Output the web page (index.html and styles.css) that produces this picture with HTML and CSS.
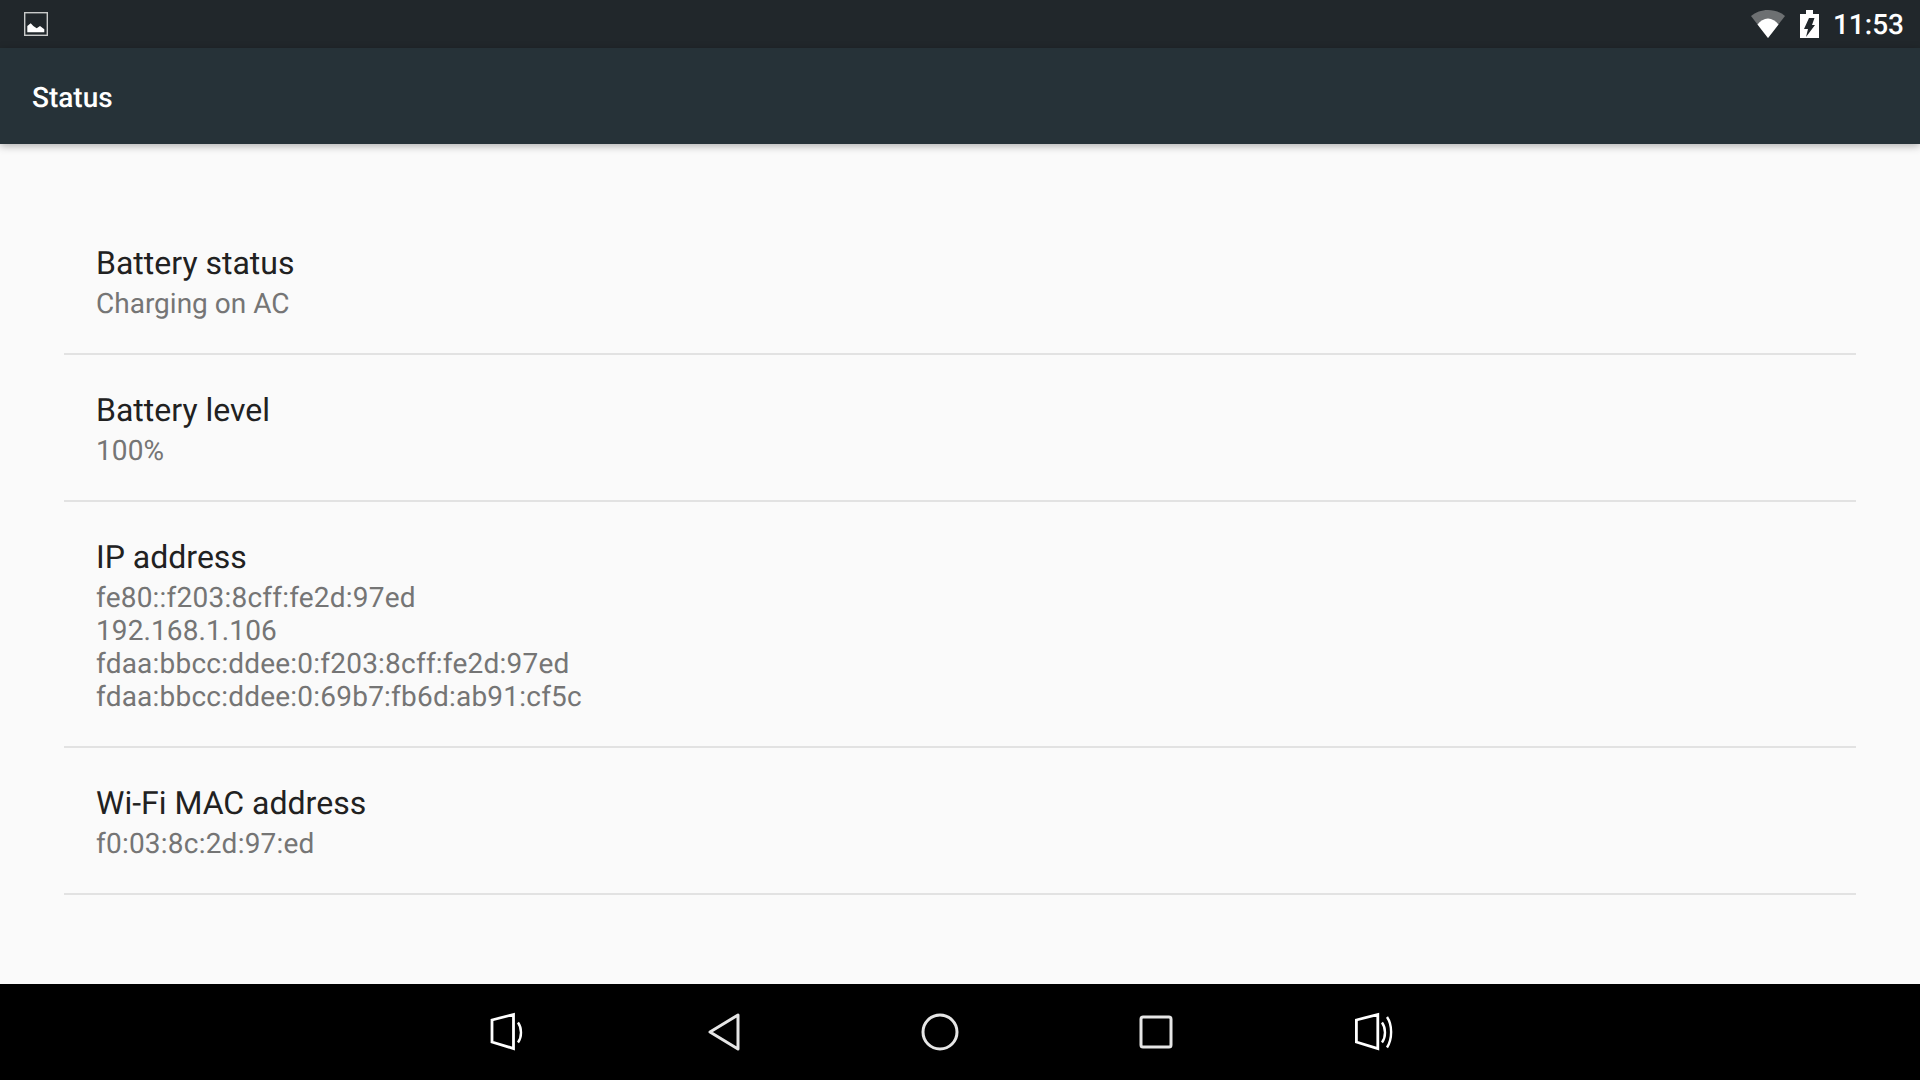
FILE: index.html
```html
<!DOCTYPE html>
<html lang="en">
<head>
<meta charset="utf-8">
<title>Status</title>
<link rel="stylesheet" href="styles.css">
</head>
<body>
<div class="screen">
  <header class="statusbar">
    <svg class="notif-icon" viewBox="0 0 24 24" width="24" height="24"><rect x="0.7" y="0.700" width="22.600" height="22.600" fill="none" stroke="#c9caca" stroke-width="1.400"/><path d="M3.300 20.300V14L6.700 11.300 9.300 14 12.700 16.300 16 14 20.300 17.300V20.300Z" fill="#fff"/></svg>
    <div class="status-right">
      <svg class="wifi" viewBox="0 0 34 28" width="34" height="28"><path d="M0 6C4.500 2.200 10.500 0 17 0S29.500 2.200 34 6L17 28Z" fill="#6d7072"/><path d="M6.500 14.500C9.300 11 13 8.500 17 8.500S24.700 11 27.500 14.500L17 28Z" fill="#fff"/></svg>
      <svg class="battery" viewBox="0 0 19 28" width="19" height="28"><path d="M6 0H13V4H19V28H0V4H6Z" fill="#fff"/><path d="M9 8H14.500L12 15H15L6 27 8 19H4Z" fill="#21272b"/></svg>
      <span class="clock">11:53</span>
    </div>
  </header>
  <div class="appbar"><h1 class="appbar-title">Status</h1></div>
  <main class="content">
    <section class="item">
      <div class="item-title">Battery status</div>
      <div class="item-sub">Charging on AC</div>
    </section>
    <section class="item">
      <div class="item-title">Battery level</div>
      <div class="item-sub num">100%</div>
    </section>
    <section class="item">
      <div class="item-title">IP address</div>
      <div class="item-sub addr">fe80::f203:8cff:fe2d:97ed</div>
      <div class="item-sub num">192.168.1.106</div>
      <div class="item-sub addr">fdaa:bbcc:ddee:0:f203:8cff:fe2d:97ed</div>
      <div class="item-sub addr">fdaa:bbcc:ddee:0:69b7:fb6d:ab91:cf5c</div>
    </section>
    <section class="item">
      <div class="item-title">Wi-Fi MAC address</div>
      <div class="item-sub addr">f0:03:8c:2d:97:ed</div>
    </section>
  </main>
  <nav class="navbar">
    <div class="nav-btn"><svg viewBox="0 0 36 40" width="36" height="40"><path d="M2 8 23.500 2.500V36.500L2 30Z" fill="none" stroke="#fff" stroke-width="2.800"/><path d="M28 10.500C32 16 32 25 28 30.500" fill="none" stroke="#fff" stroke-width="2.400"/></svg></div>
    <div class="nav-btn"><svg viewBox="0 0 36 40" width="36" height="40"><path d="M4 20 32 3V37Z" fill="none" stroke="#e6e6e6" stroke-width="3" stroke-linejoin="round"/></svg></div>
    <div class="nav-btn"><svg viewBox="0 0 38 38" width="38" height="38"><circle cx="19" cy="19" r="17" fill="none" stroke="#e6e6e6" stroke-width="3"/></svg></div>
    <div class="nav-btn"><svg viewBox="0 0 34 34" width="34" height="34"><rect x="2" y="2" width="30" height="30" rx="2" fill="none" stroke="#e6e6e6" stroke-width="3"/></svg></div>
    <div class="nav-btn"><svg viewBox="0 0 42 40" width="42" height="40"><path d="M5.400 8 26.800 2.500V36.500L5.400 30Z" fill="none" stroke="#fff" stroke-width="2.800"/><path d="M31 10.500C35 16 35 25 31 30.500" fill="none" stroke="#fff" stroke-width="2.400"/><path d="M36 5C41.500 13 41.500 27 36 35.500" fill="none" stroke="#fff" stroke-width="2.400"/></svg></div>
  </nav>
</div>
</body>
</html>
```
FILE: styles.css
```css
* { box-sizing: border-box; }
html, body { margin: 0; padding: 0; }
body { font-family: Roboto, "Liberation Sans", sans-serif; background: #fafafa; text-rendering: geometricPrecision; }
.screen { width: 1920px; height: 1080px; display: flex; flex-direction: column; overflow: hidden; }
.statusbar { height: 48px; flex: none; background: #21272b; display: flex; align-items: center; justify-content: space-between; padding: 0 16px 0 24px; }
.notif-icon { display: block; }
.status-right { display: flex; align-items: center; color: #fff; }
.wifi { display: block; margin-right: 15px; }
.battery { display: block; margin-right: 14px; }
.clock { font-size: 28px; font-weight: 500; line-height: 48px; padding-top: 2px; }
.appbar { height: 96px; flex: none; background: #263238; display: flex; align-items: center; padding: 3px 32px 0; box-shadow: 0 2px 8px rgba(0,0,0,.3); position: relative; z-index: 1; }
.appbar-title { margin: 0; font-size: 28px; font-weight: 500; color: #fff; }
.content { flex: 1; padding: 64px 64px 0; background: #fafafa; }
.item { border-bottom: 2px solid #e2e2e2; padding: 31px 32px 33px; }
.item-title { font-size: 32px; line-height: 48px; color: #212121; }
.item-sub { font-size: 28px; line-height: 33px; color: #757575; }
.addr { letter-spacing: .22px; }
.num { letter-spacing: .1px; }
.navbar { height: 96px; flex: none; background: #000; display: flex; justify-content: center; align-items: center; padding-right: 40px; }
.nav-btn { width: 216px; display: flex; justify-content: center; align-items: center; }
```
